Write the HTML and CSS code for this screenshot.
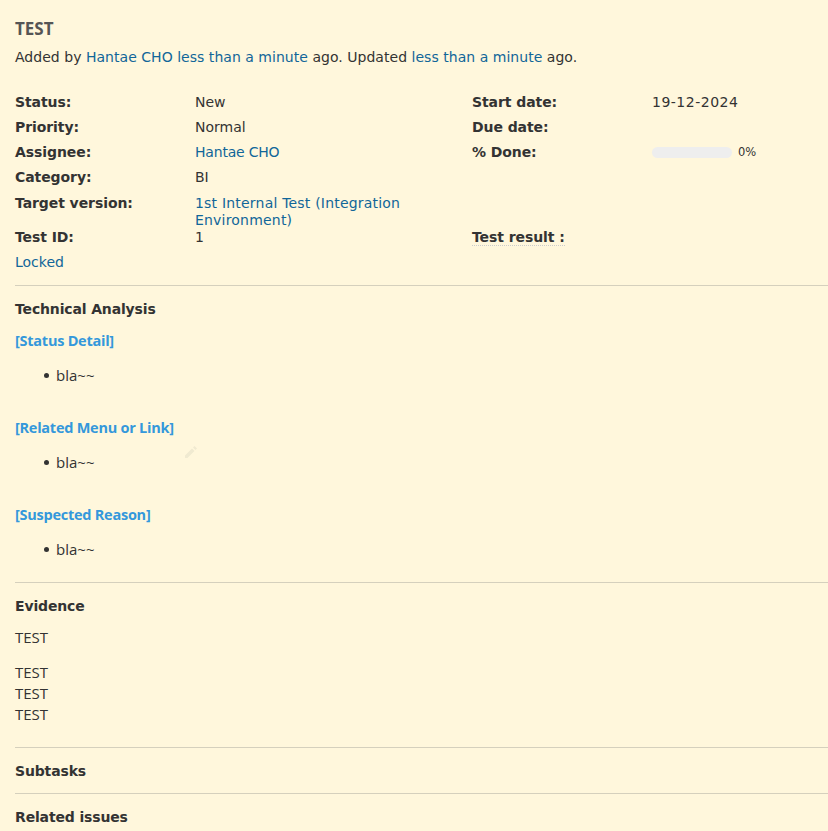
FILE: index.html
```html
<!DOCTYPE html>
<html>

<head>
    <link rel="stylesheet" href="styles.css">
</head>

<body>
    <div id="issue">
        <h3 class="subject">TEST</h3>
        <p class="author">Added by <a href="#">Hantae CHO</a> <a href="#">less than a minute</a> ago. Updated <a href="#">less than a minute</a> ago.</p>

        <div class="attributes">
            <div class="attr-column">
                <div class="attr"><div class="label">Status:</div><div class="value">New</div></div>
                <div class="attr"><div class="label">Priority:</div><div class="value">Normal</div></div>
                <div class="attr"><div class="label">Assignee:</div><div class="value"><a href="#" class="person">Hantae CHO</a></div></div>
                <div class="attr"><div class="label">Category:</div><div class="value">BI</div></div>
                <div class="attr tall"><div class="label">Target version:</div><div class="value"><a href="#" class="version">1st Internal Test (Integration Environment)</a></div></div>
                <div class="attr"><div class="label">Test ID:</div><div class="value">1</div></div>
            </div>
            <div class="attr-column">
                <div class="attr"><div class="label">Start date:</div><div class="value date">19-12-2024</div></div>
                <div class="attr"><div class="label">Due date:</div><div class="value"></div></div>
                <div class="attr">
                    <div class="label">% Done:</div>
                    <div class="value progress-value">
                        <div class="progress"></div>
                        <span class="percent">0%</span>
                    </div>
                </div>
                <div class="spacer"></div>
                <div class="attr"><div class="label"><span class="hint">Test result :</span></div><div class="value"></div></div>
            </div>
        </div>
        <div class="attr"><a href="#">Locked</a></div>

        <hr class="first">

        <div class="section">
            <p class="section-title">Technical Analysis</p>
            <h4 class="wiki-heading">[Status Detail]</h4>
            <ul class="wiki-list"><li>bla~~</li></ul>
            <h4 class="wiki-heading">[Related Menu or Link]</h4>
            <div class="edit-mark">
                <svg width="14" height="14" viewBox="0 0 14 14"><path d="M1 10.5 8 3.5 10.5 6 3.5 13 1 13ZM9 2.5 10.5 1 13 3.5 11.5 5Z" fill="#f0ead1"/></svg>
            </div>
            <ul class="wiki-list"><li>bla~~</li></ul>
            <h4 class="wiki-heading">[Suspected Reason]</h4>
            <ul class="wiki-list last"><li>bla~~</li></ul>
        </div>

        <hr>

        <div class="section">
            <p class="section-title">Evidence</p>
            <p class="wiki-text evidence-first">TEST</p>
            <p class="wiki-text">TEST<br>TEST<br>TEST</p>
        </div>

        <hr class="gap-top">

        <p class="section-title">Subtasks</p>

        <hr class="tight">

        <p class="section-title">Related issues</p>
    </div>
</body>

</html>
```

FILE: styles.css
```css
body {
    margin: 0;
    font-family: "DejaVu Sans", Verdana, sans-serif;
    font-size: 14px;
    line-height: 17px;
    color: #333;
    background-color: #fff7dc;
}

a {
    color: #169;
    text-decoration: none;
}

#issue {
    padding: 20px 0 0 15px;
}

.subject {
    margin: 0;
    font-family: "Open Sans", sans-serif;
    font-size: 17px;
    line-height: 17px;
    font-weight: 700;
    color: #555;
}

.author {
    margin: 12px 0 0;
    letter-spacing: 0.03px;
}

.attributes {
    display: grid;
    grid-template-columns: 457px 1fr;
    margin-top: 28px;
}

.attr {
    display: flex;
    min-height: 25px;
}

.tall {
    padding-top: 1px;
}

.spacer {
    height: 60px;
}

.label {
    width: 180px;
    font-weight: 700;
    letter-spacing: -0.08px;
    flex-shrink: 0;
}

.value {
    flex: 1;
    padding-right: 60px;
}

.version {
    letter-spacing: 0.2px;
}

.person {
    letter-spacing: -0.2px;
}

.date {
    letter-spacing: 0.5px;
}

.hint {
    border-bottom: 1px dotted #ccc;
}

.progress-value {
    display: flex;
    align-items: center;
    height: 17px;
}

.progress {
    width: 80px;
    height: 11px;
    border-radius: 6px;
    background-color: #eee;
}

.percent {
    margin-left: 6px;
    font-size: 11.5px;
}

hr {
    margin: 0;
    border: 0;
    border-top: 1px solid #d5d0bd;
}

hr.first {
    margin-top: 6px;
}

.section-title {
    margin: 0;
    font-weight: 700;
    letter-spacing: -0.15px;
    padding-top: 15px;
}

.wiki-heading {
    margin: 14px 0 0;
    font-family: "Open Sans", sans-serif;
    font-size: 14.5px;
    letter-spacing: -0.25px;
    font-weight: 700;
    color: #3498db;
}

.wiki-list {
    margin: 18px 0 35px;
    padding-left: 29px;
    list-style: none;
    font-family: "Open Sans", sans-serif;
    font-size: 15px;
}

.wiki-list li {
    display: flex;
    align-items: center;
}

.wiki-list li::before {
    content: "";
    width: 5px;
    height: 5px;
    margin-right: 7px;
    border-radius: 50%;
    background-color: #333;
}

.wiki-list.last {
    margin-bottom: 24px;
}

.edit-mark {
    position: absolute;
    left: 184px;
    top: 445px;
    line-height: 0;
}

.wiki-text {
    margin: 14px 0 0;
    font-family: "Open Sans", sans-serif;
    font-size: 15px;
    line-height: 21px;
}

.evidence-first {
    margin-top: 12px;
}

.gap-top {
    margin-top: 22px;
}

.tight {
    margin-top: 13px;
}
```
